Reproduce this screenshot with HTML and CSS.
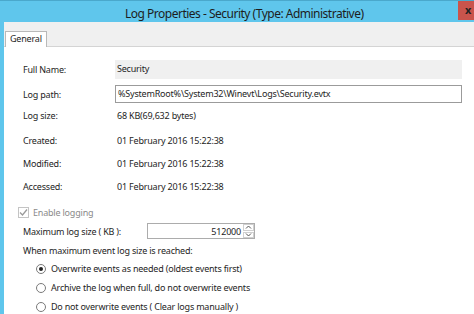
FILE: index.html
```html
<!DOCTYPE html>
<html>
  <head>
    <title>Log Properties</title>
    <meta charset="utf-8" />
    <link rel="stylesheet" href="styles.css">
  </head>
  <body>
    <div class="window">
      <div class="titlebar">
        <span class="title">Log Properties - Security (Type: Administrative)</span>
        <span class="close">x</span>
      </div>
      <div class="frame">
        <div class="tabs">
          <div class="tab">General</div>
        </div>
        <div class="panel">
          <div class="row r-name">
            <span class="label">Full Name:</span>
            <span class="value ro">Security</span>
          </div>
          <div class="row r-path">
            <span class="label">Log path:</span>
            <span class="value edit">%SystemRoot%\System32\Winevt\Logs\Security.evtx</span>
          </div>
          <div class="row r-size">
            <span class="label">Log size:</span>
            <span class="value">68 KB(69,632 bytes)</span>
          </div>
          <div class="row r-date first">
            <span class="label">Created:</span>
            <span class="value">01 February 2016 15:22:38</span>
          </div>
          <div class="row r-date">
            <span class="label">Modified:</span>
            <span class="value">01 February 2016 15:22:38</span>
          </div>
          <div class="row r-date">
            <span class="label">Accessed:</span>
            <span class="value">01 February 2016 15:22:38</span>
          </div>

          <div class="check">
            <span class="cbox">
              <svg width="9" height="9" viewBox="0 0 9 9"><path d="M1 4.5 L3.5 7 L8 1.5" fill="none" stroke="#9a9a9a" stroke-width="1.3"/></svg>
            </span>
            <span>Enable logging</span>
          </div>
          <div class="maxrow">
            <span class="maxlabel">Maximum log size ( KB ):</span>
            <div class="spin">
              <span class="spinval">512000</span>
              <span class="arrows">
                <span class="arrow"><svg width="7" height="4" viewBox="0 0 7 4"><path d="M1 3.5 L3.5 1 L6 3.5" fill="none" stroke="#555" stroke-width="1"/></svg></span>
                <span class="arrow"><svg width="7" height="4" viewBox="0 0 7 4"><path d="M1 0.5 L3.5 3 L6 0.5" fill="none" stroke="#555" stroke-width="1"/></svg></span>
              </span>
            </div>
          </div>
          <div class="when">When maximum event log size is reached:</div>
          <div class="radios">
            <div class="radio on"><span class="dot"></span>Overwrite events as needed (oldest events first)</div>
            <div class="radio"><span class="dot"></span>Archive the log when full, do not overwrite events</div>
            <div class="radio"><span class="dot"></span>Do not overwrite events ( Clear logs manually )</div>
          </div>
        </div>
      </div>
    </div>
  </body>
</html>
```

FILE: styles.css
```css
*{
  margin:0;
  padding:0;
  box-sizing:border-box;
}
body{
  width:474px;
  height:314px;
  overflow:hidden;
  font-family:"Noto Sans","Open Sans",sans-serif;
  font-size:9px;
  letter-spacing:-0.2px;
  color:#1e1e1e;
  background:#fff;
}
.window{
  width:474px;
  height:314px;
  background:#5fc6ec;
  border-top:1px solid #4aa8cc;
  display:flex;
  flex-direction:column;
}
.titlebar{
  height:23px;
  display:flex;
  align-items:flex-start;
}
.title{
  padding-left:125px;
  padding-top:4px;
  font-size:12px;
  letter-spacing:-0.5px;
  color:#1d1d1d;
}
.close{
  margin-left:auto;
  width:16px;
  height:19px;
  background:#c9544c;
  color:#222;
  font-size:11px;
  font-weight:bold;
  text-align:center;
  line-height:17px;
  padding-left:4px;
}
.frame{
  flex:1;
  margin-left:4px;
  background:#f0f0f0;
  display:flex;
  flex-direction:column;
}
.tabs{
  height:25px;
  display:flex;
  align-items:flex-end;
  padding-left:1px;
  border-bottom:1px solid #d4d4d4;
}
.tab{
  width:42px;
  height:16px;
  background:#fff;
  border:1px solid #b9b9b9;
  border-bottom:none;
  margin-bottom:-1px;
  padding-left:4px;
  line-height:14px;
}
.panel{
  flex:1;
  background:#fff;
  padding:13px 0 0 19px;
}
.row{
  display:flex;
  align-items:center;
}
.label{
  width:92px;
  flex:none;
}
.value{
  flex:none;
  width:347px;
}
.r-name{
  height:19px;
}
.ro{
  height:19px;
  background:#f0f0f0;
  line-height:17px;
  padding-left:2px;
}
.r-path{
  height:18px;
  margin-top:6px;
}
.edit{
  height:18px;
  border:1px solid #9b9b9b;
  line-height:15px;
  padding-left:2px;
}
.r-size{
  height:22px;
  margin-top:1px;
}
.r-size .value,.r-date .value{
  padding-left:2px;
}
.r-date{
  height:23px;
}
.r-date.first{
  margin-top:3px;
}
.check{
  display:flex;
  align-items:center;
  gap:4px;
  margin-top:7px;
  margin-left:-5px;
  height:14px;
  color:#8a8a8a;
}
.cbox{
  width:11px;
  height:11px;
  border:1px solid #c4c4c4;
  display:flex;
  align-items:center;
  justify-content:center;
}
.maxrow{
  display:flex;
  align-items:center;
  height:20px;
  margin-top:2px;
}
.maxlabel{
  width:124px;
}
.spin{
  width:108px;
  height:16px;
  border:1px solid #acacac;
  display:flex;
  align-items:center;
}
.spinval{
  flex:1;
  text-align:right;
  padding-right:2px;
}
.arrows{
  width:11px;
  height:14px;
  display:flex;
  flex-direction:column;
  gap:1px;
}
.arrow{
  flex:1;
  display:flex;
  align-items:center;
  justify-content:center;
  border:1px solid #d0d0d0;
}
.when{
  height:16px;
  line-height:16px;
  margin-top:2px;
}
.radios{
  padding-left:13px;
  margin-top:0;
}
.radio{
  display:flex;
  align-items:center;
  gap:5px;
  height:19px;
}
.dot{
  width:10px;
  height:10px;
  border:1px solid #7a7a7a;
  border-radius:50%;
  display:flex;
  align-items:center;
  justify-content:center;
}
.radio.on .dot::after{
  content:"";
  width:4px;
  height:4px;
  border-radius:50%;
  background:#222;
}
```
